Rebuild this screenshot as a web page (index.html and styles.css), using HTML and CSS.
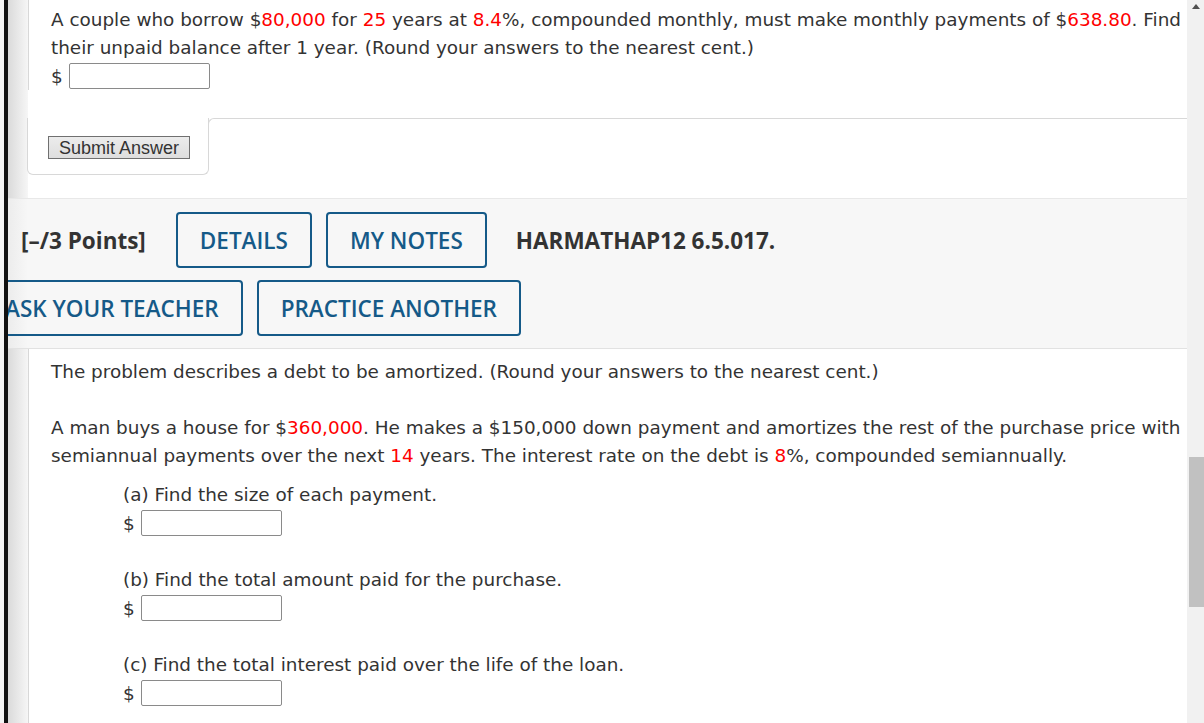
FILE: index.html
```html
<!DOCTYPE html>
<html>
<head>
<meta charset="utf-8">
<link rel="stylesheet" href="styles.css">
</head>
<body>
<div class="window">
  <div class="edge"></div>
  <div class="main">
    <section class="section first">
      <div class="gutter"></div>
      <div class="content">
        <div class="qtext">
          <p class="para">A couple who borrow $<span class="red">80,000</span> for <span class="red">25</span> years at <span class="red">8.4</span>%, compounded monthly, must make monthly payments of $<span class="red">638.80</span>. Find their unpaid balance after 1 year. (Round your answers to the nearest cent.)</p>
          <div class="answer">$ <span class="input"></span></div>
        </div>
        <div class="submit-row">
          <div class="submit-box"><button class="submit">Submit Answer</button></div>
          <div class="submit-rest"></div>
        </div>
        <div class="after"></div>
      </div>
    </section>

    <header class="band">
      <div class="band-row">
        <span class="points">[&ndash;/3 Points]</span>
        <button class="btn">DETAILS</button>
        <button class="btn">MY NOTES</button>
        <span class="code">HARMATHAP12 6.5.017.</span>
      </div>
      <div class="band-row shifted">
        <button class="btn">ASK YOUR TEACHER</button>
        <button class="btn">PRACTICE ANOTHER</button>
      </div>
    </header>

    <section class="section second">
      <div class="gutter"></div>
      <div class="content bordered">
        <p class="para">The problem describes a debt to be amortized. (Round your answers to the nearest cent.)</p>
        <p class="para gap">A man buys a house for $<span class="red">360,000</span>. He makes a $150,000 down payment and amortizes the rest of the purchase price with semiannual payments over the next <span class="red">14</span> years. The interest rate on the debt is <span class="red">8</span>%, compounded semiannually.</p>
        <div class="parts">
          <div class="part">
            <div class="line">(a) Find the size of each payment.</div>
            <div class="answer">$ <span class="input"></span></div>
          </div>
          <div class="part">
            <div class="line">(b) Find the total amount paid for the purchase.</div>
            <div class="answer">$ <span class="input"></span></div>
          </div>
          <div class="part">
            <div class="line">(c) Find the total interest paid over the life of the loan.</div>
            <div class="answer">$ <span class="input"></span></div>
          </div>
        </div>
      </div>
    </section>
  </div>
  <div class="scrollbar">
    <div class="arrow"></div>
    <div class="track"><div class="thumb"></div></div>
  </div>
</div>
</body>
</html>
```

FILE: styles.css
```css
html, body {
  margin: 0;
  padding: 0;
  background: #fff;
}
body {
  font-family: "DejaVu Sans", Verdana, sans-serif;
  font-size: 18.4px;
  color: #333;
}
.window {
  display: flex;
  height: 723px;
  overflow: hidden;
  border-left: 4px solid #f4f4f4;
}
.edge {
  width: 4px;
  flex: none;
  background: #111;
}
.main {
  flex: 1;
  min-width: 0;
  display: flex;
  flex-direction: column;
}
.section {
  display: flex;
  flex: none;
}
.second {
  flex: 1 0 auto;
}
.gutter {
  width: 20px;
  flex: none;
  background: linear-gradient(to right, #dadada, #f6f6f6);
}
.content {
  flex: 1;
  min-width: 0;
}
.bordered {
  border-left: 1px solid #d8d8d8;
  padding: 9px 2px 0 22px;
}
.qtext {
  border-left: 1px solid #d8d8d8;
  padding: 6px 0 0 22px;
}
.para {
  margin: 0;
  line-height: 28px;
}
.para.gap {
  margin-top: 28px;
}
.red {
  color: #f00;
}
.answer {
  display: flex;
  align-items: center;
  gap: 6px;
  height: 28px;
}
.input {
  display: inline-block;
  width: 139px;
  height: 24px;
  border: 1px solid #8a8a8a;
  border-radius: 2px;
  background: #fff;
}
.submit-row {
  display: flex;
  margin-top: 28px;
}
.submit-box {
  width: 182px;
  height: 57px;
  margin-left: -1px;
  border: 1px solid #d8d8d8;
  border-top: none;
  border-radius: 0 0 6px 6px;
  box-sizing: border-box;
  padding: 18px 0 0 20px;
}
.submit-rest {
  flex: 1;
  height: 8px;
  margin-left: -1px;
  border-top: 1px solid #d8d8d8;
  border-left: 1px solid #d8d8d8;
  border-top-left-radius: 6px;
}
.submit {
  font-family: "Liberation Sans", Arial, sans-serif;
  font-size: 18px;
  color: #333;
  height: 23px;
  padding: 0 10px;
  background: linear-gradient(#ececec, #dedede);
  border: 1px solid #707070;
  border-radius: 0;
  line-height: 20px;
}
.after {
  height: 23px;
}
.band {
  flex: none;
  background: linear-gradient(to right, #ececec, #f7f7f7 20px);
  border-top: 1px solid #e8e8e8;
  border-bottom: 1px solid #e2e2e2;
  padding: 13px 0 12px 0;
  overflow: hidden;
  font-family: "Open Sans", sans-serif;
  font-size: 22.5px;
}
.band-row {
  display: flex;
  align-items: center;
  gap: 14px;
  padding-left: 13px;
  white-space: nowrap;
}
.band-row.shifted {
  margin-top: 12px;
  margin-left: -40px;
}
.points, .code {
  font-weight: 700;
  color: #333;
}
.points {
  margin-right: 16px;
}
.code {
  margin-left: 15px;
}
.btn {
  flex: none;
  font-family: "Open Sans", sans-serif;
  font-size: 22.5px;
  font-weight: 600;
  color: #155a88;
  background: transparent;
  border: 2px solid #155a88;
  border-radius: 4px;
  height: 56px;
  padding: 0 22px;
}
.parts {
  padding-left: 72px;
  margin-top: 11px;
}
.part {
  margin-bottom: 29px;
}
.line {
  line-height: 28px;
}
.scrollbar {
  width: 17px;
  flex: none;
  background: #f1f1f1;
  display: flex;
  flex-direction: column;
}
.arrow {
  height: 17px;
  display: flex;
  justify-content: center;
  padding-top: 4px;
  box-sizing: border-box;
}
.arrow::before {
  content: "";
  border-left: 4px solid transparent;
  border-right: 4px solid transparent;
  border-bottom: 5px solid #505050;
  height: 0;
}
.track {
  flex: 1;
  padding-top: 440px;
  padding-left: 2px;
}
.thumb {
  height: 150px;
  background: #c1c1c1;
}
```
